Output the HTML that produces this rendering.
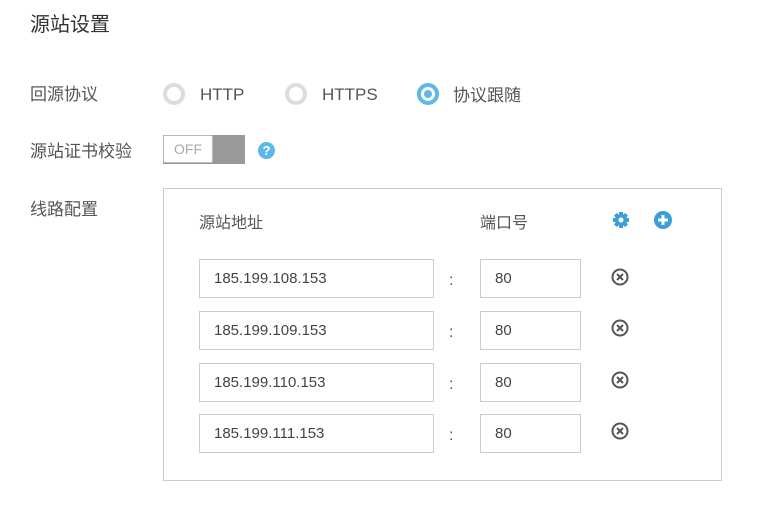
<!DOCTYPE html>
<html><head><meta charset="utf-8"><style>
body{margin:0;width:768px;height:508px;background:#fff;font-family:"Liberation Sans","Noto Sans CJK SC",sans-serif;color:#555;position:relative;overflow:hidden}
.a{position:absolute;white-space:nowrap}
.lbl{font-size:17px;color:#555}
.radio{position:absolute;width:14px;height:14px;border:4px solid #d9dce0;border-radius:50%}
.inp{position:absolute;border:1px solid #ccc;box-sizing:border-box;height:39px;font-size:15px;color:#444;line-height:37px;padding-left:14px}
</style></head><body>
<div class="a" style="left:30px;top:8px;font-size:20px;color:#333">源站设置</div>
<div class="a lbl" style="left:30px;top:80px">回源协议</div>
<div class="a lbl" style="left:30px;top:137px">源站证书校验</div>
<div class="a lbl" style="left:30px;top:195px">线路配置</div>

<div class="radio" style="left:163px;top:83px"></div>
<div class="a lbl" style="left:200px;top:85px">HTTP</div>
<div class="radio" style="left:285px;top:83px"></div>
<div class="a lbl" style="left:322px;top:85px">HTTPS</div>
<div class="radio" style="left:417px;top:83px;border-color:#5bb8e8"><div style="position:absolute;left:3px;top:3px;width:8px;height:8px;border-radius:50%;background:#5bb8e8"></div></div>
<div class="a lbl" style="left:453px;top:81px">协议跟随</div>

<div class="a" style="left:163px;top:135px;width:82px;height:29px;background:#999"></div>
<div class="a" style="left:163px;top:135px;width:50px;height:28px;background:#fff;border:1px solid #bbb;box-sizing:border-box;border-radius:2px;font-size:14px;color:#aaa;text-align:center;line-height:26px">OFF</div>
<div class="a" style="left:258px;top:142px;width:17px;height:17px;border-radius:50%;background:#5bb8e8;color:#fff;font-weight:bold;font-size:13px;text-align:center;line-height:17px">?</div>

<div class="a" style="left:163px;top:188px;width:559px;height:293px;border:1px solid #ccc;box-sizing:border-box"></div>
<div class="a" style="left:199px;top:209px;font-size:16px;color:#555">源站地址</div>
<div class="a" style="left:480px;top:209px;font-size:16px;color:#555">端口号</div>
<svg class="a" style="left:612px;top:211px" width="18" height="18" viewBox="0 0 18 18"><g fill="#3a9fd8"><circle cx="9" cy="9" r="6"/><rect x="7" y="1" width="4" height="16"/><rect x="1" y="7" width="16" height="4"/><rect x="7" y="1" width="4" height="16" transform="rotate(45 9 9)"/><rect x="7" y="1" width="4" height="16" transform="rotate(-45 9 9)"/></g><circle cx="9" cy="9" r="2.5" fill="#fff"/></svg>
<svg class="a" style="left:654px;top:211px" width="18" height="18" viewBox="0 0 18 18"><circle cx="9" cy="9" r="9" fill="#3a9fd8"/><rect x="4" y="7.5" width="10" height="3" fill="#fff"/><rect x="7.5" y="4" width="3" height="10" fill="#fff"/></svg>

<div class="inp" style="left:199px;top:259px;width:235px">185.199.108.153</div><div class="a" style="left:449px;top:272px">:</div><div class="inp" style="left:480px;top:259px;width:101px">80</div>
<div class="inp" style="left:199px;top:311px;width:235px">185.199.109.153</div><div class="a" style="left:449px;top:324px">:</div><div class="inp" style="left:480px;top:311px;width:101px">80</div>
<div class="inp" style="left:199px;top:363px;width:235px">185.199.110.153</div><div class="a" style="left:449px;top:376px">:</div><div class="inp" style="left:480px;top:363px;width:101px">80</div>
<div class="inp" style="left:199px;top:414px;width:235px">185.199.111.153</div><div class="a" style="left:449px;top:427px">:</div><div class="inp" style="left:480px;top:414px;width:101px">80</div>

<svg width="0" height="0"><defs><g id="x"><circle cx="9" cy="9" r="7.5" fill="none" stroke="#555" stroke-width="2"/><path d="M6 6L12 12M12 6L6 12" stroke="#555" stroke-width="2"/></g></defs></svg>
<svg class="a" style="left:611px;top:268px" width="18" height="18"><use href="#x"/></svg>
<svg class="a" style="left:611px;top:319px" width="18" height="18"><use href="#x"/></svg>
<svg class="a" style="left:611px;top:371px" width="18" height="18"><use href="#x"/></svg>
<svg class="a" style="left:611px;top:422px" width="18" height="18"><use href="#x"/></svg>
</body></html>
